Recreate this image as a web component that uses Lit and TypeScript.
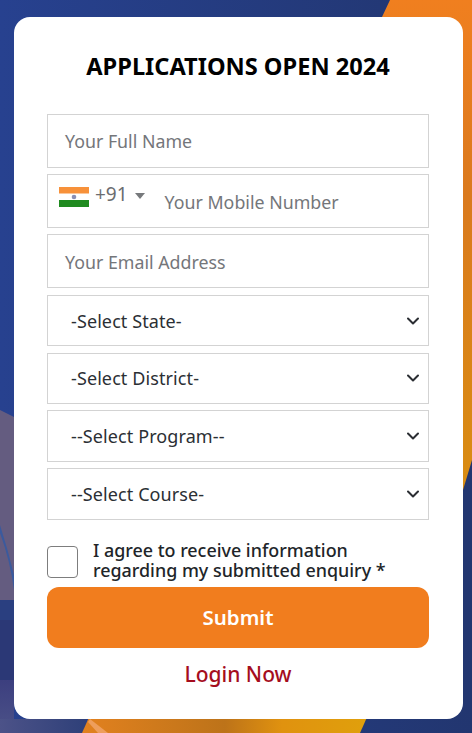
import { LitElement, html, css } from "lit";
import { customElement } from "lit/decorators.js";

@customElement("app-root")
export class AppRoot extends LitElement {
  static styles = css`
    :host {
      display: block;
      width: 472px;
      height: 733px;
      overflow: hidden;
      position: relative;
      font-family: "Noto Sans", "Open Sans", sans-serif;
    }
    .bg { position: absolute; inset: 0; }
    .wrap { position: relative; padding: 17px 9px 0 14px; }
    .card {
      background: #fff;
      border-radius: 16px;
      height: 702px;
      box-sizing: border-box;
      padding: 37px 34px 0 33px;
      display: flex;
      flex-direction: column;
    }
    h1 {
      margin: 0;
      height: 60px;
      font-size: 23.6px;
      line-height: 25px;
      font-weight: 700;
      color: #000;
      text-align: center;
      white-space: nowrap;
    }
    .fields { display: flex; flex-direction: column; }
    .field {
      box-sizing: border-box;
      height: 54px;
      border: 1px solid #d3d3d3;
      display: flex;
      align-items: center;
      padding-left: 17px;
      font-size: 17.8px;
      color: #74767a;
      margin-bottom: 6px;
    }
    .offset { padding-top: 1px; }
    .phone { padding-left: 11px; padding-top: 1px; }
    .flag { display: block; flex: none; position: relative; top: -5px; }
    .code { margin-left: 6px; color: #6b6d70; font-size: 19px; position: relative; top: -8px; }
    .caret {
      width: 0; height: 0; margin-left: 7px; margin-right: 20px;
      border-left: 5px solid transparent; border-right: 5px solid transparent;
      border-top: 6px solid #77797c; position: relative; top: -6px;
    }
    .selects { display: flex; flex-direction: column; gap: 6.25px; margin-top: 0.9px; }
    .select {
      box-sizing: border-box;
      height: 51.5px;
      border: 1px solid #d3d3d3;
      display: flex;
      align-items: center;
      justify-content: space-between;
      padding: 0 9px 0 23px;
      font-size: 18px;
      letter-spacing: 0.1px;
      color: #2b2f34;
    }
    .agree { display: flex; align-items: flex-start; gap: 15px; margin-top: 19.15px; height: 48px; }
    .box {
      box-sizing: border-box;
      width: 31px; height: 32px; flex: none;
      margin-top: 7px;
      border: 1px solid #7d7d7d;
      border-radius: 4px;
    }
    .agree p { margin: 1.5px 0 0; font-size: 17.9px; line-height: 20px; font-weight: 500; color: #212529; white-space: nowrap; }
    .submit {
      height: 61px;
      background: #f17d1e;
      color: #fff;
      border-radius: 12px;
      display: flex; align-items: center; justify-content: center;
      font-size: 20.5px; font-weight: 600;
    }
    .login { text-align: center; margin-top: 11px; font-size: 21px; line-height: 30px; font-weight: 500; color: #a50d1d; }
  `;

  render() {
    const chev = html`<svg width="12" height="8" viewBox="0 0 12 8"><path d="M1 1.5l5 5 5-5" fill="none" stroke="#2b2e33" stroke-width="2" stroke-linecap="round" stroke-linejoin="round"/></svg>`;
    return html`
      <svg class="bg" width="472" height="733" viewBox="0 0 472 733" aria-hidden="true">
        <defs>
          <linearGradient id="bl" x1="0" y1="0" x2="1" y2="0"><stop offset="0" stop-color="#27418f"/><stop offset="1" stop-color="#223670"/></linearGradient>
          <linearGradient id="or" x1="0" y1="0" x2="0" y2="1"><stop offset="0" stop-color="#f07f1f"/><stop offset="0.4" stop-color="#da7a1e"/><stop offset="1" stop-color="#d98d12"/></linearGradient>
          <linearGradient id="yo" x1="0" y1="0" x2="1" y2="0"><stop offset="0" stop-color="#e2811f"/><stop offset="0.5" stop-color="#bd7319"/><stop offset="0.7" stop-color="#e0920f"/><stop offset="1" stop-color="#e0a00c"/></linearGradient>
          <linearGradient id="lf" x1="0" y1="0" x2="0" y2="1"><stop offset="0" stop-color="#3c3f7f"/><stop offset="1" stop-color="#4c5288"/></linearGradient>
          <linearGradient id="bt" x1="0" y1="0" x2="1" y2="0"><stop offset="0" stop-color="#4c5288"/><stop offset="1" stop-color="#2f4079"/></linearGradient>
        </defs>
        <rect width="472" height="733" fill="url(#bl)"/>
        <path d="M390 0H472V460L463 490V300L382 17Z" fill="url(#or)"/>
        <path d="M0 410L14 417V600H0Z" fill="#645c80"/>
        <path d="M0 533Q10 560 14 590V575Q8 550 0 525Z" fill="#3a5a9e"/>
        <rect y="600" width="14" height="20" fill="#2a3f80"/>
        <rect y="620" width="14" height="60" fill="#2b3876"/>
        <rect y="680" width="14" height="53" fill="url(#lf)"/>
        <rect x="0" y="719" width="86" height="14" fill="url(#bt)"/>
        <path d="M82 733L90 715H368L360 733Z" fill="url(#yo)"/>
        <path d="M90 719L108 733H98L88 722Z" fill="#ee9e5c"/>
      </svg>
      <div class="wrap">
        <div class="card">
          <h1>APPLICATIONS OPEN 2024</h1>
          <div class="fields">
            <div class="field">Your Full Name</div>
            <div class="field phone">
              <svg class="flag" width="30" height="20" viewBox="0 0 30 20">
                <rect width="30" height="6.5" fill="#f7913a"/>
                <rect y="13" width="30" height="7" fill="#1f8a1f"/>
                <circle cx="15" cy="10" r="2.3" fill="#8a8fb5"/>
              </svg>
              <span class="code">+91</span><span class="caret"></span>
              <span>Your Mobile Number</span>
            </div>
            <div class="field offset">Your Email Address</div>
          </div>
          <div class="selects">
            <div class="select"><span>-Select State-</span>${chev}</div>
            <div class="select"><span>-Select District-</span>${chev}</div>
            <div class="select"><span>--Select Program--</span>${chev}</div>
            <div class="select"><span>--Select Course-</span>${chev}</div>
          </div>
          <div class="agree">
            <div class="box"></div>
            <p>I agree to receive information<br />regarding my submitted enquiry *</p>
          </div>
          <div class="submit">Submit</div>
          <div class="login">Login Now</div>
        </div>
      </div>
    `;
  }
}
